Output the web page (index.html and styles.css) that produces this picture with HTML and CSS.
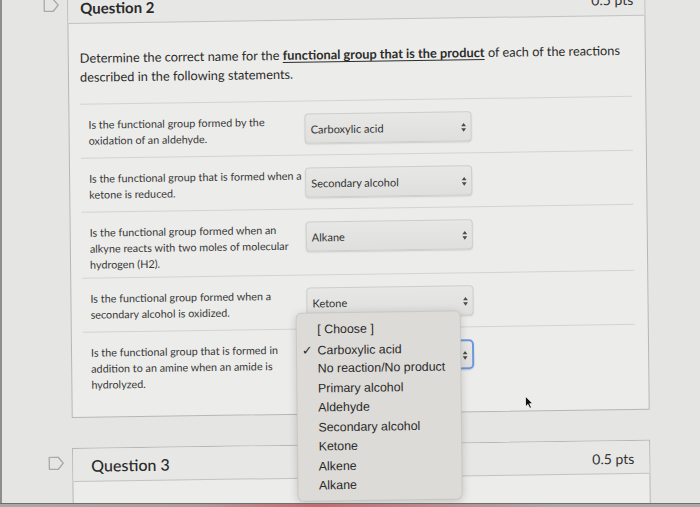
FILE: index.html
```html
<!DOCTYPE html>
<html>
<head>
<meta charset="utf-8">
<link rel="stylesheet" href="styles.css">
</head>
<body>
<div class="page">
  <div class="viewport">
  <div class="screen">
    <section class="question q2">
      <div class="gutter">
        <svg class="flag" width="16" height="14" viewBox="0 0 16 14"><path d="M1 1 H10 L15 7 L10 13 H1 Z" fill="none" stroke="#a9a9a7" stroke-width="1.4" stroke-linejoin="round"/></svg>
      </div>
      <div class="card">
        <header class="card-head">
          <h2 class="q-title">Question 2</h2>
          <span class="pts">0.5 pts</span>
        </header>
        <div class="card-body">
          <p class="prompt">Determine the correct name for the <strong class="em">functional group that is the product</strong> of each of the reactions described in the following statements.</p>

          <div class="row">
            <div class="stmt">Is the functional group formed by the oxidation of an aldehyde.</div>
            <div class="select-wrap">
              <div class="select"><span class="val">Carboxylic acid</span><svg class="arrows" width="6" height="10" viewBox="0 0 6 10"><path d="M0.6 4 L3 0.6 L5.4 4 Z M0.6 6 L3 9.4 L5.4 6 Z" fill="#4a4a4a"/></svg></div>
            </div>
          </div>

          <div class="row">
            <div class="stmt">Is the functional group that is formed when a ketone is reduced.</div>
            <div class="select-wrap">
              <div class="select"><span class="val">Secondary alcohol</span><svg class="arrows" width="6" height="10" viewBox="0 0 6 10"><path d="M0.6 4 L3 0.6 L5.4 4 Z M0.6 6 L3 9.4 L5.4 6 Z" fill="#4a4a4a"/></svg></div>
            </div>
          </div>

          <div class="row">
            <div class="stmt">Is the functional group formed when an alkyne reacts with two moles of molecular hydrogen (H2).</div>
            <div class="select-wrap">
              <div class="select"><span class="val">Alkane</span><svg class="arrows" width="6" height="10" viewBox="0 0 6 10"><path d="M0.6 4 L3 0.6 L5.4 4 Z M0.6 6 L3 9.4 L5.4 6 Z" fill="#4a4a4a"/></svg></div>
            </div>
          </div>

          <div class="row">
            <div class="stmt">Is the functional group formed when a secondary alcohol is oxidized.</div>
            <div class="select-wrap">
              <div class="select"><span class="val">Ketone</span><svg class="arrows" width="6" height="10" viewBox="0 0 6 10"><path d="M0.6 4 L3 0.6 L5.4 4 Z M0.6 6 L3 9.4 L5.4 6 Z" fill="#4a4a4a"/></svg></div>
              <ul class="menu">
                <li><span class="check"></span>[ Choose ]</li>
                <li><span class="check">✓</span>Carboxylic acid</li>
                <li><span class="check"></span>No reaction/No product</li>
                <li><span class="check"></span>Primary alcohol</li>
                <li><span class="check"></span>Aldehyde</li>
                <li><span class="check"></span>Secondary alcohol</li>
                <li><span class="check"></span>Ketone</li>
                <li><span class="check"></span>Alkene</li>
                <li><span class="check"></span>Alkane</li>
              </ul>
            </div>
          </div>

          <div class="row">
            <div class="stmt">Is the functional group that is formed in addition to an amine when an amide is hydrolyzed.</div>
            <div class="select-wrap">
              <div class="select focus"><span class="val">Carboxylic acid</span><svg class="arrows" width="6" height="10" viewBox="0 0 6 10"><path d="M0.6 4 L3 0.6 L5.4 4 Z M0.6 6 L3 9.4 L5.4 6 Z" fill="#4a4a4a"/></svg></div>
            </div>
          </div>

          <svg class="cursor" width="9" height="14" viewBox="0 0 10 16"><path d="M0.8 0.8 L0.8 13 L3.6 10.3 L5.6 14.8 L7.6 13.9 L5.6 9.5 L9.2 9.5 Z" fill="#111" stroke="#fff" stroke-width="0.9" stroke-linejoin="round"/></svg>
        </div>
      </div>
    </section>

    <section class="question q3">
      <div class="gutter">
        <svg class="flag" width="16" height="14" viewBox="0 0 16 14"><path d="M1 1 H10 L15 7 L10 13 H1 Z" fill="none" stroke="#a9a9a7" stroke-width="1.4" stroke-linejoin="round"/></svg>
      </div>
      <div class="card">
        <header class="card-head">
          <h2 class="q-title">Question 3</h2>
          <span class="pts">0.5 pts</span>
        </header>
        <div class="card-body"></div>
      </div>
    </section>
  </div>
  </div>
  <div class="bezel"></div>
</div>
</body>
</html>
```

FILE: styles.css
```css
html, body {
  margin: 0;
  padding: 0;
}

body {
  width: 700px;
  height: 507px;
  overflow: hidden;
  background: #e4e4e2;
  font-family: Lato, "Liberation Sans", sans-serif;
  color: #2e2e2e;
}

.page {
  width: 700px;
  height: 507px;
  display: flex;
  flex-direction: column;
  overflow: hidden;
  background: #e5e5e3;
  box-shadow: inset 2px 0 0 #8e8e8c;
}

.viewport {
  flex: 1;
  min-height: 0;
  overflow: hidden;
}

.bezel {
  height: 3px;
  flex: none;
  border-top: 1px solid #6e6e6c;
  background: linear-gradient(90deg, #a9a9a7 0%, #b29a9a 28%, #c46a72 45%, #b98a8e 62%, #a9a9a7 80%, #a9a9a7 100%);
}

.screen {
  width: 700px;
  transform: matrix(1, -0.0145, 0.011, 1, 0, 0);
  transform-origin: 0 0;
}

.question {
  display: flex;
  align-items: flex-start;
}

.q2 {
  margin-top: -12px;
}

.q3 {
  margin-top: 30px;
}

.gutter {
  width: 67px;
  flex: none;
  display: flex;
  justify-content: flex-end;
  padding-right: 8px;
  box-sizing: border-box;
}

.flag {
  display: block;
}

.q2 .flag {
  margin-top: 11px;
}

.q3 .flag {
  margin-top: 8px;
}

.card {
  width: 578px;
  flex: none;
  border: 1px solid #b6b6b4;
  background: #ececea;
  box-sizing: border-box;
}

.card-head {
  display: flex;
  justify-content: space-between;
  align-items: flex-end;
  box-sizing: border-box;
  border-bottom: 1px solid #c3c3c1;
  background: #e7e7e5;
}

.q2 .card-head {
  height: 36px;
  padding: 0 11px 5px 12px;
}

.q3 .card-head {
  height: 33px;
  padding: 7px 15px 6px 18px;
  align-items: baseline;
}

.q-title {
  margin: 0;
  font-size: 15px;
  line-height: 20px;
  font-weight: 700;
  color: #2a2a2a;
}

.q3 .q-title {
  font-size: 16px;
  font-weight: 500;
}

.pts {
  font-size: 14px;
  line-height: 20px;
  color: #333;
}

.card-body {
  position: relative;
  padding: 25px 13px 19px 11px;
}

.q3 .card-body {
  height: 40px;
}

.prompt {
  margin: 0 0 18px;
  font-size: 12.8px;
  line-height: 18.5px;
  color: #2c2c2c;
}

.em {
  font-weight: 700;
  text-decoration: underline;
  text-underline-offset: 2px;
}

.row {
  display: flex;
  align-items: flex-start;
  box-sizing: border-box;
  min-height: 54px;
  border-top: 1px solid #d3d3d1;
  padding: 12px 0 5px 8px;
}

.stmt {
  width: 216px;
  flex: none;
  font-size: 10.8px;
  line-height: 16px;
  color: #383838;
}

.select-wrap {
  position: relative;
  flex: none;
}

.select {
  width: 167px;
  height: 30px;
  box-sizing: border-box;
  display: flex;
  align-items: center;
  justify-content: space-between;
  padding: 1px 4px 0 5px;
  border: 1px solid #cdcdcb;
  border-radius: 4px;
  background: linear-gradient(#e7e7e5, #dfdfdd);
  box-shadow: 0 1px 1.5px rgba(0, 0, 0, 0.14);
  font-size: 11px;
  color: #333;
}

.select.focus {
  border: 2px solid #6c98dc;
  border-radius: 5px;
}

.arrows {
  display: block;
}

.menu {
  position: absolute;
  z-index: 10;
  left: -11px;
  top: 25px;
  width: 165px;
  height: 189px;
  box-sizing: border-box;
  margin: 0;
  padding: 7px 0 6px;
  list-style: none;
  background: #dddbd7;
  border: 1px solid rgba(0, 0, 0, 0.08);
  border-radius: 6px;
  box-shadow: 0 2px 8px rgba(0, 0, 0, 0.18);
  font-family: "Liberation Sans", Arial, sans-serif;
  font-size: 12.4px;
  color: #2a2a2a;
}

.menu li {
  height: 19.55px;
  line-height: 19.55px;
  padding-left: 5px;
  white-space: nowrap;
}

.check {
  display: inline-block;
  width: 15.5px;
  font-family: "DejaVu Sans", sans-serif;
  font-size: 12.5px;
  font-weight: 700;
}

.cursor {
  position: absolute;
  left: 452px;
  top: 378px;
}
```
